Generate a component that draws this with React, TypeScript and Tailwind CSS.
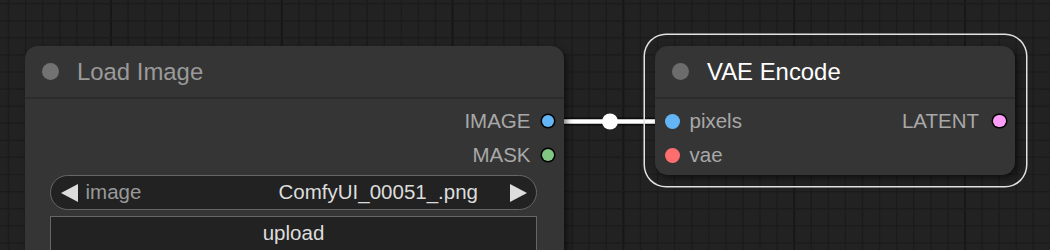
import React from "react";

const GRID = 17.08;

function Grid() {
  const vLines: { x: number; major: boolean }[] = [];
  for (let k = 0; k < 62; k++) {
    vLines.push({ x: 8.5 + GRID * k, major: k % 10 === 6 });
  }
  const hLines: { y: number; major: boolean }[] = [];
  for (let k = 0; k < 16; k++) {
    hLines.push({ y: 3.7 + GRID * k, major: false });
  }
  return (
    <svg className="absolute inset-0" width={1050} height={250}>
      {vLines.map((l, i) => (
        <line
          key={"v" + i}
          x1={l.x}
          x2={l.x}
          y1={0}
          y2={250}
          stroke={l.major ? "#171717" : "#1b1b1b"}
          strokeWidth={l.major ? 2 : 1.2}
        />
      ))}
      {hLines.map((l, i) => (
        <line
          key={"h" + i}
          x1={0}
          x2={1050}
          y1={l.y}
          y2={l.y}
          stroke={l.major ? "#171717" : "#1b1b1b"}
          strokeWidth={l.major ? 2 : 1.2}
        />
      ))}
    </svg>
  );
}

function Link() {
  return (
    <svg className="absolute inset-0" width={1050} height={250}>
      <line x1={547} y1={121.5} x2={672} y2={121.5} stroke="#000" strokeOpacity={0.6} strokeWidth={8} />
      <line x1={547} y1={121.5} x2={672} y2={121.5} stroke="#ffffff" strokeWidth={4.4} />
      <circle cx={610} cy={121.5} r={8} fill="#ffffff" />
    </svg>
  );
}

function OutDot({ color }: { color: string }) {
  return (
    <div
      className="w-[12.5px] h-[12.5px] rounded-full shadow-[0_0_0_1.5px_#000]"
      style={{ backgroundColor: color }}
    />
  );
}

function InDot({ color }: { color: string }) {
  return <div className="w-[15px] h-[15px] rounded-full" style={{ backgroundColor: color }} />;
}

function LeftArrow() {
  return (
    <svg width="17" height="18" viewBox="0 0 17 18">
      <polygon points="0,9 17,0 17,18" fill="#dddddd" />
    </svg>
  );
}

function RightArrow() {
  return (
    <svg width="17" height="18" viewBox="0 0 17 18">
      <polygon points="17,9 0,0 0,18" fill="#dddddd" />
    </svg>
  );
}

export default function App() {
  return (
    <div className="relative w-[1050px] h-[250px] overflow-hidden bg-[#222222] font-['Liberation_Sans',Arial,sans-serif]">
      <Grid />
      <Link />

      {/* Load Image node */}
      <div className="absolute left-[25px] top-[46px] w-[539px] h-[240px] rounded-[13px] bg-[#353535] shadow-[3px_3px_6px_rgba(0,0,0,0.5)]">
        <div className="flex h-[53px] items-center border-b-2 border-[#2c2c2c]">
          <div className="ml-[16.5px] w-[17px] h-[17px] rounded-full bg-[#727272]" />
          <div className="ml-[18.5px] text-[23.9px] leading-none text-[#9a9a9a]">Load Image</div>
        </div>
        <div className="pt-[5px]">
          <div className="flex h-[34px] items-center justify-end pr-[10px]">
            <span className="text-[20.5px] leading-none text-[#a8a8a8]">IMAGE</span>
            <div className="ml-[11px]">
              <OutDot color="#64b5f6" />
            </div>
          </div>
          <div className="flex h-[34px] items-center justify-end pr-[10px]">
            <span className="text-[20.5px] leading-none text-[#a8a8a8]">MASK</span>
            <div className="ml-[11px]">
              <OutDot color="#81c784" />
            </div>
          </div>
        </div>
        <div className="mt-[3px] ml-[25px] w-[487px] h-[35px] rounded-full border border-[#666666] bg-[#222222] flex items-center pl-[10px] pr-[9px]">
          <LeftArrow />
          <span className="ml-[7.5px] text-[20.5px] leading-none text-[#999999]">image</span>
          <span className="ml-auto text-[20.5px] leading-none text-[#dddddd]">ComfyUI_00051_.png</span>
          <div className="ml-[32px]">
            <RightArrow />
          </div>
        </div>
        <div className="mt-[6px] ml-[25px] w-[487px] h-[35px] border border-[#666666] bg-[#222222] flex items-center justify-center">
          <span className="text-[20.5px] leading-none text-[#dddddd]">upload</span>
        </div>
      </div>

      {/* VAE Encode node */}
      <div className="absolute left-[655px] top-[46px] w-[360px] h-[129px] rounded-[13px] bg-[#353535] shadow-[3px_3px_6px_rgba(0,0,0,0.5)]">
        <div className="flex h-[53px] items-center border-b-2 border-[#2c2c2c]">
          <div className="ml-[17px] w-[17px] h-[17px] rounded-full bg-[#6c6c6c]" />
          <div className="ml-[18px] text-[23.9px] leading-none text-[#ffffff]">VAE Encode</div>
        </div>
        <div className="pt-[5px]">
          <div className="flex h-[34px] items-center">
            <div className="ml-[10px]">
              <InDot color="#64b5f6" />
            </div>
            <span className="ml-[9.5px] text-[20.5px] leading-none text-[#a8a8a8]">pixels</span>
            <span className="ml-auto text-[20.5px] leading-none text-[#a8a8a8]">LATENT</span>
            <div className="ml-[14px] mr-[9.5px]">
              <OutDot color="#ff9cf9" />
            </div>
          </div>
          <div className="flex h-[34px] items-center">
            <div className="ml-[10px]">
              <InDot color="#ff6e6e" />
            </div>
            <span className="ml-[9.5px] text-[20.5px] leading-none text-[#a8a8a8]">vae</span>
          </div>
        </div>
      </div>

      {/* selection outline */}
      <div className="absolute left-[645px] top-[35px] w-[381px] h-[151px] rounded-[21px] shadow-[0_0_0_1.5px_#e2e2e2]" />
    </div>
  );
}
